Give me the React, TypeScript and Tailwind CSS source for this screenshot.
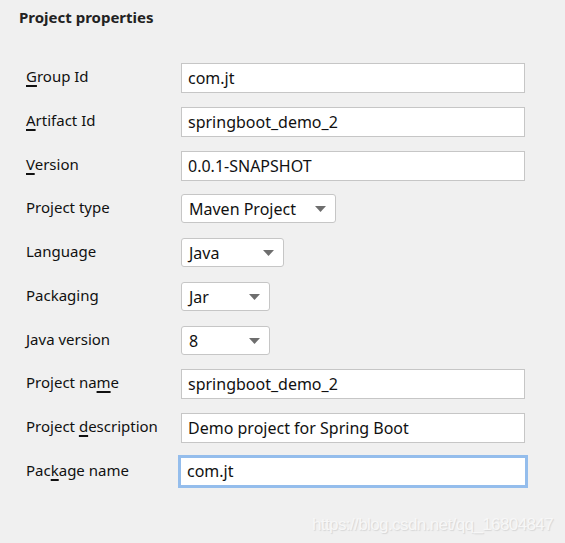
import React from "react";

const font = { fontFamily: '"Noto Sans", "Open Sans", sans-serif' };

function Label({ pre, u, post }: { pre: string; u: string; post: string }) {
  return (
    <div className="mt-[-2px] w-[181px] shrink-0 pl-[26px] text-[15px] text-[#111]">
      {pre}
      <span className="underline decoration-2 underline-offset-[3px]">{u}</span>
      {post}
    </div>
  );
}

function TextInput({ value, focused }: { value: string; focused?: boolean }) {
  return (
    <div
      className={
        focused
          ? "ml-[-3px] h-[33px] w-[350px] shrink-0 border-[3px] border-[#94bdec] bg-white pl-[6px] text-[16px] leading-[27px] text-[#111]"
          : "h-[30px] w-[344px] shrink-0 border border-[#c6c6c6] bg-white pl-[6px] text-[16px] leading-[28px] text-[#111]"
      }
    >
      {value}
    </div>
  );
}

function Select({ value, width }: { value: string; width: string }) {
  return (
    <div
      className={`flex h-[29px] shrink-0 items-center justify-between rounded-[3px] border border-[#c6c6c6] bg-white pl-[7px] pr-[9px] text-[16px] text-[#111] ${width}`}
    >
      <span>{value}</span>
      <svg width="11" height="6" viewBox="0 0 11 6">
        <polygon points="0,0 11,0 5.5,6" fill="#6e6e6e" />
      </svg>
    </div>
  );
}

export default function App() {
  return (
    <div className="relative h-[543px] w-[565px] overflow-hidden bg-[#f0f0f0]" style={font}>
      <div className="pl-[19px] pt-[6px] text-[15px] font-bold text-[#222]">
        Project properties
      </div>
      <div className="mt-[34px] flex flex-col">
        <div className="flex h-[30px] items-center">
          <Label pre="" u="G" post="roup Id" />
          <TextInput value="com.jt" />
        </div>
        <div className="mt-[14px] flex h-[30px] items-center">
          <Label pre="" u="A" post="rtifact Id" />
          <TextInput value="springboot_demo_2" />
        </div>
        <div className="mt-[14px] flex h-[30px] items-center">
          <Label pre="" u="V" post="ersion" />
          <TextInput value="0.0.1-SNAPSHOT" />
        </div>
        <div className="mt-[13px] flex h-[30px] items-center">
          <Label pre="Project type" u="" post="" />
          <Select value="Maven Project" width="w-[155px]" />
        </div>
        <div className="mt-[14px] flex h-[30px] items-center">
          <Label pre="Language" u="" post="" />
          <Select value="Java" width="w-[103px]" />
        </div>
        <div className="mt-[14px] flex h-[30px] items-center">
          <Label pre="Packaging" u="" post="" />
          <Select value="Jar" width="w-[89px]" />
        </div>
        <div className="mt-[14px] flex h-[30px] items-center">
          <Label pre="Java version" u="" post="" />
          <Select value="8" width="w-[89px]" />
        </div>
        <div className="mt-[13px] flex h-[30px] items-center">
          <Label pre="Project na" u="m" post="e" />
          <TextInput value="springboot_demo_2" />
        </div>
        <div className="mt-[14px] flex h-[30px] items-center">
          <Label pre="Project " u="d" post="escription" />
          <TextInput value="Demo project for Spring Boot" />
        </div>
        <div className="mt-[14px] flex h-[30px] items-center">
          <Label pre="Pac" u="k" post="age name" />
          <TextInput value="com.jt" focused />
        </div>
      </div>
      <div
        className="absolute left-[312px] top-[512px] whitespace-nowrap text-[17px] tracking-[-0.6px] text-[#f7f7f7] [text-shadow:1px_1px_1px_#d6d6d6]"
        style={{ fontFamily: '"Liberation Sans", Arial, sans-serif' }}
      >
        https://blog.csdn.net/qq_16804847
      </div>
    </div>
  );
}
